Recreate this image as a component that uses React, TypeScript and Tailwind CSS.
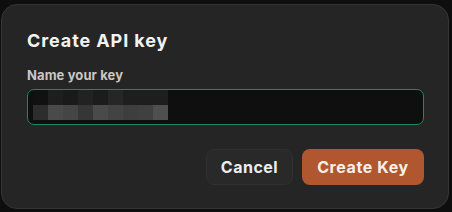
import React from "react";

const top = ["#111111", "#1e1e1e", "#1a1a1a", "#222222", "#1c1c1c", "#262626", "#1e1e1e", "#1e1e1e", "#1e1e1e"];
const bottom = ["#2d2d2d", "#4a4a4a", "#454545", "#363636", "#4a4a4a", "#434343", "#3e3e3e", "#404040", "#4f4f4f"];

export default function App() {
  return (
    <div className="w-[452px] h-[212px] bg-[#0e0e0e] pt-[4px] pl-[1px]" style={{ fontFamily: "Inter, 'Noto Sans', sans-serif" }}>
      <div className="w-[448px] h-[205px] rounded-[16px] border border-[#353535] bg-[#252525] pl-[25px] pr-[24px] pt-[24px]">
        <h2 className="text-[18px] leading-[24px] font-bold text-[#f2f2f2] tracking-[0.9px]">Create API key</h2>
        <label className="block mt-[13px] text-[13px] leading-[18px] font-bold text-[#cac7c3] tracking-[0.1px]">Name your key</label>
        <div className="mt-[5px] h-[36px] rounded-[7px] border border-[#1d8a5e] bg-[#0f0f0f] pl-[5px] flex items-start">
          <div className="flex flex-col">
            <div className="flex">
              {top.map((c, i) => (
                <div key={i} className="w-[15px] h-[15px]" style={{ background: c }} />
              ))}
            </div>
            <div className="flex">
              {bottom.map((c, i) => (
                <div key={i} className="w-[15px] h-[15px]" style={{ background: c }} />
              ))}
            </div>
          </div>
        </div>
        <div className="mt-[24px] flex justify-end gap-[9px]">
          <button className="h-[36px] w-[87px] rounded-[8px] border border-[#303030] bg-[#292929] text-[16px] font-bold text-[#ededed] tracking-[0.5px]">Cancel</button>
          <button className="h-[36px] w-[122px] rounded-[8px] bg-[#b1572f] text-[16px] font-bold text-[#f5f0ec] tracking-[0.6px]">Create Key</button>
        </div>
      </div>
    </div>
  );
}
